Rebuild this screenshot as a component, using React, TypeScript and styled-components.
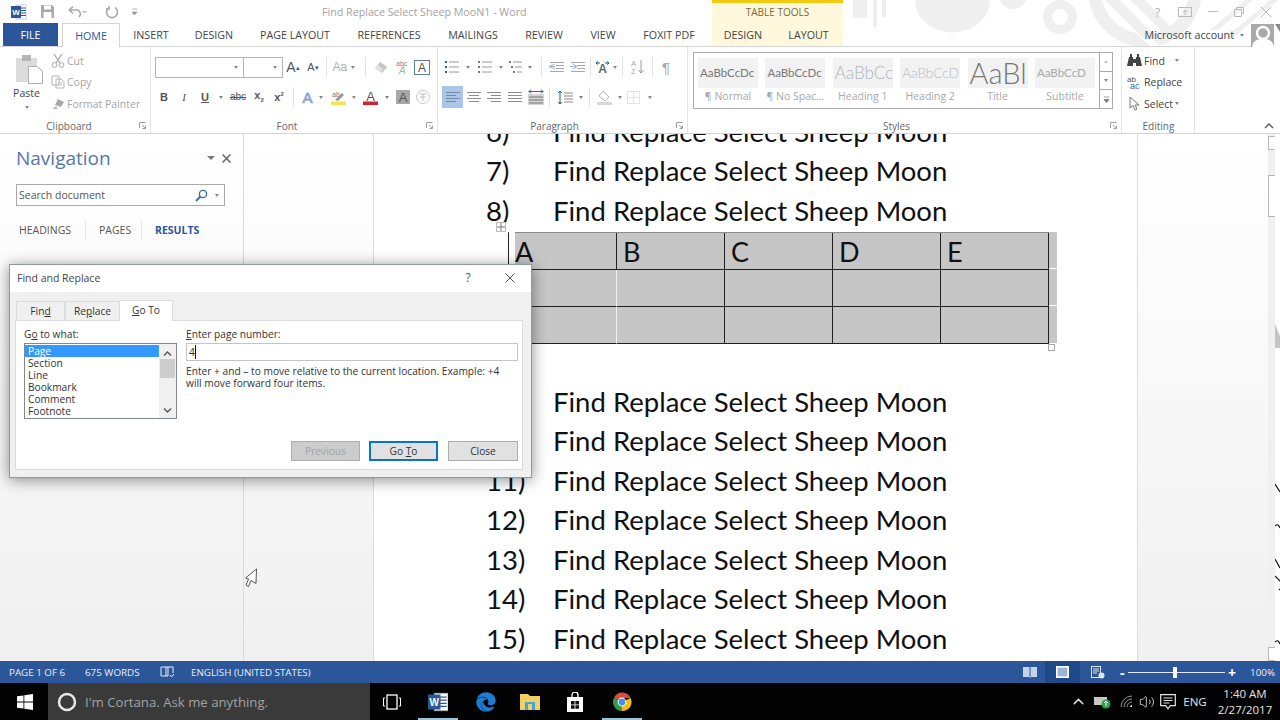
import React from 'react';
import styled, { createGlobalStyle } from 'styled-components';
import { ChevronUp, Volume2 } from 'lucide-react';
import { FaEdge } from 'react-icons/fa';

const GlobalStyle = createGlobalStyle`
  html, body { margin: 0; padding: 0; background: #fff; }
  * { box-sizing: border-box; }
`;

const UI = '"Open Sans", "Noto Sans", sans-serif';
const BLUE = '#2b579a';

const Screen = styled.div`
  width: 1280px;
  height: 720px;
  position: relative;
  overflow: hidden;
  display: flex;
  flex-direction: column;
  font-family: ${UI};
  color: #444;
`;

/* ---------- title + tabs ---------- */
const Top = styled.div`
  position: relative;
  height: 47px;
  background: #fff;
  border-bottom: 1px solid #d4d4d4;
`;
const Art = styled.svg`
  position: absolute;
  left: 840px;
  top: 0;
`;
const TitleBar = styled.div`
  position: relative;
  height: 23px;
  display: flex;
  align-items: center;
`;
const Qat = styled.div`
  width: 322px;
  display: flex;
  align-items: center;
  padding-left: 11px;
`;
const QatCell = styled.span<{ $w: number }>`
  width: ${(p) => p.$w}px;
  display: flex;
  align-items: center;
  justify-content: flex-start;
`;
const DocTitle = styled.div`
  width: 390px;
  font-size: 10.7px;
  color: #a3a3a3;
  white-space: nowrap;
`;
const ToolsHead = styled.div`
  width: 131px;
  height: 23px;
  background: #fff8dc;
  border-top: 3px solid #f3c911;
  color: #7b6a35;
  font-size: 10px;
  text-align: center;
  line-height: 19px;
`;
const WinControls = styled.div`
  margin-left: auto;
  display: flex;
  align-items: center;
  color: #b5b5b5;
  font-size: 13px;
`;
const WinCell = styled.span<{ $w: number }>`
  width: ${(p) => p.$w}px;
  display: flex;
  justify-content: center;
  align-items: center;
`;
const TabRow = styled.div`
  position: relative;
  height: 24px;
  display: flex;
  align-items: stretch;
  padding-left: 3px;
  font-size: 10.7px;
`;
const FileTab = styled.div`
  width: 55px;
  height: 23px;
  background: ${BLUE};
  color: #fff;
  display: flex;
  align-items: center;
  justify-content: center;
`;
const HomeTab = styled.div`
  width: 58px;
  height: 24px;
  margin-left: 4px;
  background: #fff;
  border: 1px solid #d4d4d4;
  border-bottom: none;
  color: ${BLUE};
  display: flex;
  align-items: center;
  justify-content: center;
  position: relative;
  z-index: 1;
`;
const Tab = styled.div<{ $w: number }>`
  width: ${(p) => p.$w}px;
  display: flex;
  align-items: center;
  justify-content: center;
  white-space: nowrap;
`;
const ToolsTabs = styled.div`
  width: 131px;
  height: 23px;
  margin-left: 4px;
  background: #fff8dc;
  display: flex;
`;
const Account = styled.div`
  margin-left: auto;
  display: flex;
  align-items: center;
  font-size: 10.7px;
  color: #444;
  gap: 6px;
`;
const Avatar = styled.svg`
  margin-left: 1px;
  display: block;
`;

/* ---------- ribbon ---------- */
const Ribbon = styled.div`
  height: 87px;
  background: #fff;
  border-bottom: 1px solid #d4d4d4;
  display: flex;
  position: relative;
`;
const Group = styled.div<{ $w: number; $pad?: number }>`
  width: ${(p) => p.$w}px;
  height: 86px;
  padding-left: ${(p) => p.$pad ?? 4}px;
  border-right: 1px solid #e4e4e4;
  display: flex;
  flex-direction: column;
  position: relative;
`;
const Rows = styled.div`
  padding-top: 9px;
  display: flex;
  flex-direction: column;
  gap: 8px;
`;
const Row = styled.div`
  height: 22px;
  display: flex;
  align-items: center;
`;
const GroupLabel = styled.div<{ $pr: number }>`
  margin-top: auto;
  margin-left: -4px;
  height: 14px;
  line-height: 14px;
  padding-right: ${(p) => p.$pr}px;
  text-align: center;
  font-size: 10px;
  color: #666;
  position: relative;
`;
const Launcher = styled.svg`
  position: absolute;
  right: 4px;
  top: 3px;
`;
const Cell = styled.span<{ $w: number; $bg?: string }>`
  width: ${(p) => p.$w}px;
  height: 22px;
  display: flex;
  align-items: center;
  justify-content: center;
  flex: none;
  background: ${(p) => p.$bg ?? 'transparent'};
`;
const Letter = styled.span<{ $size?: number; $color?: string; $weight?: number; $italic?: boolean; $under?: boolean }>`
  font-size: ${(p) => p.$size ?? 12}px;
  color: ${(p) => p.$color ?? '#555'};
  font-weight: ${(p) => p.$weight ?? 400};
  font-style: ${(p) => (p.$italic ? 'italic' : 'normal')};
  text-decoration: ${(p) => (p.$under ? 'underline' : 'none')};
  font-family: "Liberation Sans", sans-serif;
  line-height: 1;
`;
const Chev = styled.span`
  width: 0;
  height: 0;
  border-left: 2.5px solid transparent;
  border-right: 2.5px solid transparent;
  border-top: 3px solid #888;
`;
const Sep = styled.span<{ $l: number; $r: number }>`
  width: 1px;
  height: 20px;
  background: #e4e4e4;
  margin: 0 ${(p) => p.$r}px 0 ${(p) => p.$l}px;
  flex: none;
`;
const Combo = styled.div<{ $w: number }>`
  width: ${(p) => p.$w}px;
  height: 21px;
  border: 1px solid #b5b5b5;
  margin-right: -1px;
  background: #fff;
  display: flex;
  align-items: center;
  justify-content: flex-end;
  padding-right: 5px;
  flex: none;
`;
const ClipWrap = styled.div`
  display: flex;
  margin-left: -4px;
`;
const PasteCol = styled.div`
  width: 50px;
  display: flex;
  flex-direction: column;
  align-items: center;
  padding-top: 8px;
  padding-left: 3px;
  font-size: 10.5px;
  color: #444;
`;
const PasteArt = styled.svg`
  margin-left: 5px;
`;
const PasteLabel = styled.div`
  margin-top: 1px;
  line-height: 16px;
  margin-bottom: 5px;
`;
const SmallList = styled.div`
  padding-top: 3px;
  display: flex;
  flex-direction: column;
`;
const SmallItem = styled.div<{ $dark?: boolean }>`
  height: 21.6px;
  display: flex;
  align-items: center;
  gap: 2px;
  font-size: 10.5px;
  white-space: nowrap;
  color: ${(p) => (p.$dark ? '#444' : '#a6a6a6')};
`;
const SmallIcon = styled.span`
  width: 15px;
  display: flex;
  justify-content: center;
`;
const Gallery = styled.div`
  margin: 5px 0 0 1px;
  width: 420px;
  height: 57px;
  border: 1px solid #ababab;
  display: flex;
  padding: 5px 0 0 4px;
`;
const StyleItem = styled.div`
  width: 60px;
  margin-right: 7.4px;
  flex: none;
  text-align: center;
  &:nth-child(6) {
    margin-right: 4px;
  }
`;
const StylePreview = styled.div<{ $size: number; $color: string; $thin?: boolean }>`
  height: 30px;
  background: #f2f2f2;
  font-size: ${(p) => p.$size}px;
  color: ${(p) => p.$color};
  line-height: 30px;
  overflow: hidden;
  white-space: nowrap;
  text-align: left;
  padding-left: 2px;
  font-family: "Lato", sans-serif;
  font-weight: ${(p) => (p.$thin ? 300 : 400)};
`;
const StyleName = styled.div`
  font-size: 10.5px;
  color: #a8a8a8;
  line-height: 16px;
  white-space: nowrap;
`;
const GalleryScroll = styled.div`
  margin: -5px 0 0 0;
  width: 14px;
  flex: none;
  border-left: 1px solid #ababab;
  display: flex;
  flex-direction: column;
`;
const GalleryBtn = styled.div<{ $last?: boolean }>`
  flex: 1;
  border-bottom: ${(p) => (p.$last ? 'none' : '1px solid #ababab')};
  display: flex;
  align-items: center;
  justify-content: center;
`;
const Collapse = styled.svg`
  position: absolute;
  left: 1264px;
  top: 76px;
`;

/* ---------- main ---------- */
const Main = styled.div`
  flex: 1;
  min-height: 0;
  display: flex;
  background: linear-gradient(#ffffff, #fbfbfb 30%, #f0f0f0);
`;
const NavPane = styled.div`
  width: 244px;
  flex: none;
  border-right: 1px solid #d9d9d9;
  padding: 11px 0 0 16px;
`;
const NavHead = styled.div`
  display: flex;
  align-items: center;
  width: 215px;
  height: 26px;
  font-size: 19px;
  color: #5578a8;
`;
const NavClose = styled.span`
  margin-left: auto;
  display: flex;
  align-items: center;
  gap: 7px;
`;
const SearchBox = styled.div`
  margin-top: 13px;
  width: 209px;
  height: 22px;
  border: 1px solid #a9a9a9;
  background: #fff;
  display: flex;
  align-items: center;
  padding: 0 5px 0 2px;
  font-size: 10.5px;
  color: #555;
`;
const SearchIcons = styled.span`
  margin-left: auto;
  display: flex;
  align-items: center;
  gap: 7px;
`;
const NavTabs = styled.div`
  margin-top: 17px;
  display: flex;
  font-size: 10.5px;
  color: #555;
  padding-left: 3px;
`;
const NavTab = styled.span<{ $w: number; $on?: boolean; $split?: boolean }>`
  width: ${(p) => p.$w}px;
  white-space: nowrap;
  color: ${(p) => (p.$on ? BLUE : '#555')};
  font-weight: ${(p) => (p.$on ? 700 : 400)};
  position: relative;
  &::after {
    content: '';
    display: ${(p) => (p.$split ? 'block' : 'none')};
    position: absolute;
    right: 13px;
    top: -2px;
    width: 1px;
    height: 20px;
    background: #e6e6e6;
  }
`;
const Gutter = styled.div`
  width: 130px;
  flex: none;
  border-right: 1px solid #dcdcdc;
`;
const Page = styled.div`
  width: 764px;
  flex: none;
  background: #fff;
  border-right: 1px solid #dcdcdc;
  overflow: hidden;
  padding: 0 0 0 112px;
`;
const DocFlow = styled.div`
  margin-top: -22.5px;
`;
const Line = styled.div`
  height: 39.5px;
  line-height: 39.5px;
  display: flex;
  font-family: "Lato", "Liberation Sans", sans-serif;
  font-size: 27.5px;
  color: #111;
  white-space: nowrap;
`;
const Num = styled.span`
  width: 67px;
  flex: none;
`;
const Blank = styled.div`
  height: 38px;
`;
const TableWrap = styled.div`
  position: relative;
  margin: 1.5px 0 0 22px;
  width: 541px;
`;
const Table = styled.div`
  display: grid;
  grid-template-columns: repeat(5, 108px);
  grid-auto-rows: 37px;
  background: #c6c6c6;
  border-top: 1px solid #8c8c8c;
  border-left: 1px solid #222;
  width: 541px;
`;
const TableCell = styled.div<{ $first?: boolean; $pale?: boolean }>`
  position: relative;
  border-right: 1px solid ${(p) => (p.$pale ? '#f0f0f0' : '#222')};
  border-bottom: 1px solid #222;
  font-family: "Lato", "Liberation Sans", sans-serif;
  font-size: 27px;
  line-height: 37px;
  padding-left: 6px;
  color: #111;
  background: ${(p) => (p.$first ? 'linear-gradient(90deg, #fff 6px, #c6c6c6 6px)' : 'transparent')};
`;
const TopGap = styled.span`
  position: absolute;
  left: 0;
  top: -1px;
  width: 6px;
  height: 1px;
  background: #fff;
`;
const MoveHandle = styled.div`
  position: absolute;
  left: -12px;
  top: -10px;
  width: 10px;
  height: 10px;
  border: 1px solid #bbb;
  background: #fff;
  display: flex;
  align-items: center;
  justify-content: center;
`;
const RowEnd = styled.div`
  position: absolute;
  left: 541px;
  top: 0;
  width: 8px;
  height: 111px;
  background: linear-gradient(
    #c6c6c6 36px,
    #fff 36px,
    #fff 37px,
    #c6c6c6 37px,
    #c6c6c6 73px,
    #fff 73px,
    #fff 74px,
    #c6c6c6 74px
  );
`;
const ResizeHandle = styled.div`
  position: absolute;
  left: 540px;
  top: 112px;
  width: 7px;
  height: 7px;
  border: 1px solid #aaa;
  background: #fff;
`;
const RightGutter = styled.div`
  flex: 1;
  min-width: 0;
`;
const ScrollBar = styled.div`
  width: 7px;
  flex: none;
  background: #f0f0f0;
  display: flex;
  flex-direction: column;
  padding-top: 2px;
`;
const ScrollBtn = styled.div`
  height: 14px;
  border: 1px solid #b8b8b8;
  border-right: none;
  background: #fff;
  display: flex;
  align-items: center;
  justify-content: center;
`;
const ScrollThumb = styled.div`
  margin-top: 25px;
  height: 42px;
  border: 1px solid #b8b8b8;
  border-right: none;
  background: #fff;
`;
const ScrollEnd = styled(ScrollBtn)`
  margin-top: auto;
`;
const Stray = styled.svg`
  flex: none;
  display: block;
  background: #fff;
`;

/* ---------- status + taskbar ---------- */
const StatusBar = styled.div`
  height: 22px;
  background: ${BLUE};
  color: #e8eef7;
  font-size: 9.8px;
  display: flex;
  align-items: center;
  padding-left: 9px;
`;
const StatusItem = styled.span<{ $w: number }>`
  width: ${(p) => p.$w}px;
  white-space: nowrap;
  display: flex;
  align-items: center;
`;
const ViewBtn = styled.span<{ $w: number; $on?: boolean }>`
  width: ${(p) => p.$w}px;
  height: 22px;
  display: flex;
  align-items: center;
  justify-content: center;
  background: ${(p) => (p.$on ? '#1f4a8a' : 'transparent')};
`;
const StatusRight = styled.div`
  margin-left: auto;
  display: flex;
  align-items: center;
`;
const Zoom = styled.div`
  display: flex;
  align-items: center;
  margin-left: 5px;
  width: 116px;
  gap: 3px;
  color: #fff;
  font-size: 14px;
  font-weight: 700;
`;
const ZoomTrack = styled.div`
  flex: 1;
  height: 1px;
  background: #dfe7f3;
  position: relative;
`;
const ZoomThumb = styled.span`
  position: absolute;
  left: 45px;
  top: -5px;
  width: 4px;
  height: 11px;
  background: #fff;
`;
const ZoomPct = styled.span`
  width: 35px;
  text-align: right;
  padding-right: 5px;
  margin-left: 9px;
`;
const Taskbar = styled.div`
  height: 37px;
  background: #020202;
  display: flex;
  align-items: center;
`;
const StartBtn = styled.div`
  width: 48px;
  display: flex;
  justify-content: center;
  padding-left: 2px;
`;
const Cortana = styled.div`
  width: 322px;
  height: 37px;
  background: #3a3a3a;
  display: flex;
  align-items: center;
  padding-left: 9px;
  gap: 8px;
  color: #a2a2a2;
  font-size: 13.2px;
  white-space: nowrap;
`;
const TaskIcon = styled.div<{ $w: number; $on?: boolean }>`
  width: ${(p) => p.$w}px;
  height: 37px;
  display: flex;
  align-items: center;
  justify-content: center;
  position: relative;
  &::after {
    content: '';
    display: ${(p) => (p.$on ? 'block' : 'none')};
    position: absolute;
    left: 4px;
    right: 4px;
    bottom: 0;
    height: 2px;
    background: #9cc4d8;
  }
`;
const Tray = styled.div`
  margin-left: auto;
  display: flex;
  align-items: center;
  color: #e4e4e4;
  font-size: 11.5px;
`;
const TrayCell = styled.span<{ $w: number }>`
  width: ${(p) => p.$w}px;
  display: flex;
  justify-content: center;
  align-items: center;
`;
const Clock = styled.div`
  width: 70px;
  text-align: center;
  line-height: 16px;
  font-size: 11.5px;
`;

/* ---------- dialog ---------- */
const Dialog = styled.div`
  position: absolute;
  left: 9px;
  top: 264px;
  width: 523px;
  height: 214px;
  background: #f0f0f0;
  border: 1px solid #8f9a9a;
  box-shadow: 0 2px 14px rgba(0, 0, 0, 0.45);
  display: flex;
  flex-direction: column;
  font-size: 10.2px;
  color: #333;
`;
const DlgTitle = styled.div`
  height: 27px;
  flex: none;
  background: #fff;
  display: flex;
  align-items: center;
  padding: 0 0 2px 7px;
  font-size: 10.5px;
  color: #444;
`;
const DlgHelp = styled.span`
  margin-left: auto;
  width: 42px;
  font-size: 12px;
  text-align: center;
  color: #555;
`;
const DlgClose = styled.span`
  width: 42px;
  display: flex;
  justify-content: center;
`;
const DlgTabs = styled.div`
  height: 28px;
  flex: none;
  display: flex;
  align-items: flex-end;
  padding-left: 6px;
`;
const DlgTab = styled.div<{ $w: number; $on?: boolean }>`
  width: ${(p) => p.$w}px;
  height: ${(p) => (p.$on ? 21 : 19)}px;
  background: ${(p) => (p.$on ? '#fff' : '#f0f0f0')};
  border: 1px solid #dcdcdc;
  border-bottom: none;
  border-left: ${(p) => (p.$on ? 'none' : '1px solid #dcdcdc')};
  display: flex;
  align-items: center;
  justify-content: center;
  padding-bottom: ${(p) => (p.$on ? 2 : 0)}px;
  margin-bottom: ${(p) => (p.$on ? -1 : 0)}px;
  position: relative;
`;
const DlgPanel = styled.div`
  margin: 0 8px 0 5px;
  height: 150px;
  background: #fff;
  border: 1px solid #dcdcdc;
  padding: 6px 4px 0 8px;
  display: flex;
  flex-direction: column;
`;
const DlgCols = styled.div`
  display: flex;
  gap: 9px;
`;
const ListCol = styled.div`
  width: 153px;
  flex: none;
`;
const EntryCol = styled.div`
  flex: 1;
`;
const FieldLabel = styled.div`
  line-height: 14px;
  margin-bottom: 2px;
`;
const ListBox = styled.div`
  height: 76px;
  border: 1px solid #828790;
  display: flex;
  padding: 1px 0 0 0;
`;
const ListItems = styled.div`
  flex: 1;
`;
const ListItem = styled.div<{ $on?: boolean }>`
  height: 12.1px;
  line-height: 12px;
  padding-left: 3px;
  background: ${(p) => (p.$on ? '#3399ff' : 'transparent')};
  color: ${(p) => (p.$on ? '#fff' : '#333')};
`;
const ListScroll = styled.div`
  width: 17px;
  background: #f0f0f0;
  margin-top: -1px;
  display: flex;
  flex-direction: column;
  align-items: center;
  padding-top: 7px;
`;
const ListThumb = styled.div`
  width: 15px;
  height: 19px;
  background: #cdcdcd;
  margin-top: 3px;
`;
const ListDown = styled.div`
  margin-top: auto;
  margin-bottom: 5px;
  line-height: 0;
`;
const TextInput = styled.div`
  height: 18px;
  border: 1px solid #c4c4c4;
  padding-left: 2px;
  line-height: 16px;
`;
const Caret = styled.span`
  border-right: 1px solid #111;
`;
const Help = styled.div`
  margin-top: 4px;
  line-height: 12px;
  white-space: nowrap;
`;
const DlgButtons = styled.div`
  margin-top: auto;
  margin-bottom: 8px;
  display: flex;
  justify-content: flex-end;
`;
const DlgButton = styled.div<{ $kind?: 'off' | 'main'; $ml: number }>`
  width: ${(p) => (p.$kind ? 69 : 70)}px;
  height: 20px;
  margin-left: ${(p) => p.$ml}px;
  display: flex;
  align-items: center;
  justify-content: center;
  background: ${(p) => (p.$kind === 'off' ? '#cccccc' : '#e1e1e1')};
  color: ${(p) => (p.$kind === 'off' ? '#a3a3a3' : '#333')};
  border: ${(p) => (p.$kind === 'main' ? '2px solid #0a74c8' : '1px solid #adadad')};
`;
const U = styled.span`
  text-decoration: underline;
`;
const Pointer = styled.svg`
  position: absolute;
  left: 243px;
  top: 567px;
`;

/* ---------- drawings ---------- */
const Lines = ({ n = 4, w = 14, c = '#8d8d8d', align = 'left' }: { n?: number; w?: number; c?: string; align?: string }) => {
  const widths = [w, w - 4, w, w - 4, w];
  return (
    <svg width={w} height={12} viewBox={`0 0 ${w} 12`}>
      {Array.from({ length: n }).map((_, i) => {
        const lw = align === 'justify' ? w : widths[i];
        const x = align === 'left' || align === 'justify' ? 0 : align === 'right' ? w - lw : (w - lw) / 2;
        return <rect key={i} x={x} y={i * 3 + 1} width={lw} height={1} fill={c} />;
      })}
    </svg>
  );
};

const ListGlyph = ({ kind }: { kind: 'bullet' | 'num' | 'multi' }) => (
  <svg width="15" height="14" viewBox="0 0 15 14">
    {[1, 6, 11].map((y, i) => (
      <g key={y}>
        <rect x={kind === 'multi' ? i * 2 : 0} y={y} width="2" height="2" fill={kind === 'bullet' ? '#2f5d9a' : '#777'} />
        <rect x={4 + (kind === 'multi' ? i * 2 : 0)} y={y + 0.5} width={kind === 'multi' ? 9 - i * 2 : 10} height="1" fill="#999" />
      </g>
    ))}
  </svg>
);

const Indent = ({ dir }: { dir: 'in' | 'out' }) => (
  <svg width="16" height="12" viewBox="0 0 16 12">
    {[1, 4, 7, 10].map((y) => (
      <rect key={y} x={y === 1 || y === 10 ? 2 : 8} y={y} width={y === 1 || y === 10 ? 14 : 8} height="1" fill="#a8a8a8" />
    ))}
    <path d={dir === 'out' ? 'M7 3L1 5.5L7 8M1 5.5h6' : 'M1 5.5h6M4 3l4 2.5L4 8'} stroke="#a0b4cc" fill="none" />
  </svg>
);

const WordIcon = ({ size = 16 }: { size?: number }) => (
  <svg width={size} height={size} viewBox="0 0 16 16">
    <rect x="5" y="1" width="11" height="14" fill="#fff" stroke="#9ab" strokeWidth="0.6" />
    <path d="M9 4h6M9 6.5h6M9 9h6M9 11.5h6" stroke="#2b579a" />
    <rect x="0" y="2" width="10" height="12" fill="#2b579a" />
    <text x="5" y="11" fontSize="8" fontWeight="700" fill="#fff" textAnchor="middle" fontFamily="Liberation Sans">W</text>
  </svg>
);

const ChromeIcon = () => (
  <svg width="20" height="20" viewBox="0 0 20 20">
    <path d="M10 10L2.2 5.5A9 9 0 0 1 18.6 6H10z" fill="#de4b3b" />
    <path d="M10 10L18.6 6A9 9 0 0 1 10 19z" fill="#f4c20d" />
    <path d="M10 10v9A9 9 0 0 1 2.2 5.5z" fill="#2f9e52" />
    <circle cx="10" cy="10" r="4.4" fill="#fff" />
    <circle cx="10" cy="10" r="3.4" fill="#4a8af4" />
  </svg>
);

const DOC_TEXT = 'Find Replace Select Sheep Moon';

const launcher = (
  <Launcher width="7" height="7" viewBox="0 0 7 7">
    <path d="M0.5 6V0.5H6.5M3 3l3.2 3.2M6.5 3.5v3h-3" stroke="#888" fill="none" strokeWidth="0.8" />
  </Launcher>
);

const App: React.FC = () => (
  <Screen>
    <GlobalStyle />
    <Top>
      <Art width="440" height="46" viewBox="0 0 440 46">
        <g fill="#efefef">
          <rect x="13" y="0" width="14" height="18" />
          <rect x="33" y="0" width="4" height="27" />
          <rect x="42" y="0" width="4" height="17" />
          <path d="M75 0h75a37 32 0 0 1-75 0z" />
          <circle cx="173" cy="-5" r="14" />
          <circle cx="220" cy="17" r="17" />
          <circle cx="220" cy="17" r="8" fill="#fff" />
          <circle cx="305" cy="-10" r="57" />
          <circle cx="305" cy="-10" r="44" fill="#fff" />
          <path d="M255 -5L310 46l10 0L262 -8z" fill="#fff" />
          <path d="M265 0L305 40l12-2L280 0zM290 0l35 34 8-5L305 0z" />
          <path d="M370 30L405 0h8L378 30zM385 38L430 0h8L393 38z" />
        </g>
      </Art>
      <TitleBar>
        <Qat>
          <QatCell $w={29}><WordIcon /></QatCell>
          <QatCell $w={27}>
            <svg width="15" height="15" viewBox="0 0 15 15">
              <path d="M1 1h11l2 2v11H1z" fill="#a9a9a9" />
              <rect x="4" y="1.5" width="7" height="4" fill="#fff" />
              <rect x="3.5" y="8" width="8" height="6" fill="#fff" />
            </svg>
          </QatCell>
          <QatCell $w={38}>
            <svg width="24" height="12" viewBox="0 0 24 12">
              <path d="M2 4h8a4 4 0 0 1 2 7M2 4l4-3.5M2 4l4 3.5" stroke="#a9a9a9" strokeWidth="1.6" fill="none" />
              <path d="M15 5h5l-2.5 2.500z" fill="#bbb" />
            </svg>
          </QatCell>
          <QatCell $w={26}>
            <svg width="14" height="14" viewBox="0 0 14 14">
              <path d="M4 2.500A5.500 5.500 0 1 0 10 2.500M4 1v3H1" stroke="#a9a9a9" strokeWidth="1.6" fill="none" />
            </svg>
          </QatCell>
          <QatCell $w={10}>
            <svg width="7" height="8" viewBox="0 0 7 8">
              <path d="M1 1h5M1 4h5L3.500 7z" stroke="#999" fill="#999" strokeWidth="0.7" />
            </svg>
          </QatCell>
        </Qat>
        <DocTitle>Find Replace Select Sheep MooN1 - Word</DocTitle>
        <ToolsHead>TABLE TOOLS</ToolsHead>
        <WinControls>
          <WinCell $w={27}>?</WinCell>
          <WinCell $w={28}>
            <svg width="14" height="10" viewBox="0 0 14 10">
              <rect x="0.500" y="0.500" width="13" height="9" fill="none" stroke="#bbb" />
              <path d="M7 8V3M5 5l2-2 2 2" stroke="#bbb" fill="none" />
            </svg>
          </WinCell>
          <WinCell $w={27}>
            <svg width="10" height="2"><rect width="10" height="1" fill="#bbb" /></svg>
          </WinCell>
          <WinCell $w={26}>
            <svg width="10" height="10" viewBox="0 0 10 10">
              <path d="M2.500 2.500V.5h7v6h-2M.5 2.500h7v7h-7z" fill="none" stroke="#bbb" />
            </svg>
          </WinCell>
          <WinCell $w={28}>
            <svg width="10" height="10" viewBox="0 0 10 10">
              <path d="M0 0l10 10M10 0L0 10" stroke="#b5b5b5" />
            </svg>
          </WinCell>
        </WinControls>
      </TitleBar>
      <TabRow>
        <FileTab>FILE</FileTab>
        <HomeTab>HOME</HomeTab>
        <Tab $w={62}>INSERT</Tab>
        <Tab $w={64}>DESIGN</Tab>
        <Tab $w={98}>PAGE LAYOUT</Tab>
        <Tab $w={90}>REFERENCES</Tab>
        <Tab $w={78}>MAILINGS</Tab>
        <Tab $w={64}>REVIEW</Tab>
        <Tab $w={54}>VIEW</Tab>
        <Tab $w={78}>FOXIT PDF</Tab>
        <ToolsTabs>
          <Tab $w={62}>DESIGN</Tab>
          <Tab $w={69}>LAYOUT</Tab>
        </ToolsTabs>
        <Account>
          Microsoft account
          <Chev />
          <Avatar width="29" height="23" viewBox="0 0 29 23">
            <rect width="29" height="23" fill="#a9a9a9" />
            <circle cx="12" cy="9" r="6" fill="none" stroke="#fff" strokeWidth="2.500" />
            <path d="M1 23c1-7 6-8 11-8s10 1 11 8z" fill="#fff" />
            <rect x="23" width="6" height="23" fill="#fff" />
            <path d="M24 0h5v8z" fill="#8c8c8c" />
          </Avatar>
        </Account>
      </TabRow>
    </Top>

    <Ribbon>
      <Group $w={151}>
        <ClipWrap>
          <PasteCol>
            <PasteArt width="27" height="29" viewBox="0 0 27 29">
              <rect x="0" y="3" width="21" height="24" fill="#dcdcdc" />
              <rect x="6" y="0" width="9" height="6" fill="#b5b5b5" />
              <path d="M12.500 11.500h9l5 5v12h-14z" fill="#fff" stroke="#b0b0b0" />
            </PasteArt>
            <PasteLabel>Paste</PasteLabel>
            <Chev />
          </PasteCol>
          <SmallList>
            <SmallItem>
              <SmallIcon>
                <svg width="14" height="14" viewBox="0 0 14 14">
                  <path d="M3 0l6 9M11 0L5 9" stroke="#a9a9a9" strokeWidth="1.300" />
                  <circle cx="3.500" cy="11" r="2.400" fill="none" stroke="#a9a9a9" />
                  <circle cx="10.500" cy="11" r="2.400" fill="none" stroke="#a9a9a9" />
                </svg>
              </SmallIcon>
              Cut
            </SmallItem>
            <SmallItem>
              <SmallIcon>
                <svg width="14" height="14" viewBox="0 0 14 14">
                  <path d="M1 1h7v9H1zM5 4h5l3 3v6H5z" fill="#fff" stroke="#b5b5b5" />
                  <path d="M7 8h4M7 10h4" stroke="#c0c0c0" />
                </svg>
              </SmallIcon>
              Copy
            </SmallItem>
            <SmallItem>
              <SmallIcon>
                <svg width="14" height="12" viewBox="0 0 14 12">
                  <path d="M7 1l6 3-3 5-6-2z" fill="#a8a8a8" />
                  <path d="M5 8l-4 3h6z" fill="#bdbdbd" />
                </svg>
              </SmallIcon>
              Format Painter
            </SmallItem>
          </SmallList>
        </ClipWrap>
        <GroupLabel $pr={12}>Clipboard{launcher}</GroupLabel>
      </Group>

      <Group $w={287}>
        <Rows>
          <Row>
            <Combo $w={89}><Chev /></Combo>
            <Combo $w={40}><Chev /></Combo>
            <Cell $w={22}><Letter $size={14} $color="#555">A</Letter><Letter $size={7} $color="#2b579a">▴</Letter></Cell>
            <Cell $w={18}><Letter $size={11} $color="#555">A</Letter><Letter $size={7} $color="#2b579a">▾</Letter></Cell>
            <Sep $l={4} $r={4} />
            <Cell $w={26}><Letter $size={12} $color="#b0b0b0">Aa</Letter>&nbsp;<Chev /></Cell>
            <Sep $l={8} $r={4} />
            <Cell $w={22}>
              <svg width="14" height="13" viewBox="0 0 14 13">
                <path d="M6 1l7 5-5 6-7-5z" fill="#c4c4c4" />
                <path d="M1 7l3-3 5 4-2 3z" fill="#e2e2e2" />
              </svg>
            </Cell>
            <Cell $w={20}>
              <svg width="14" height="15" viewBox="0 0 14 15">
                <text x="1" y="6" fontSize="7" fill="#888" fontFamily="Liberation Sans">abc</text>
                <text x="4" y="14" fontSize="10" fontStyle="italic" fill="#b0b0b0" fontFamily="Liberation Sans">A</text>
              </svg>
            </Cell>
            <Cell $w={20}>
              <svg width="16" height="15" viewBox="0 0 16 15">
                <rect x="0.500" y="0.500" width="15" height="14" fill="#fff" stroke="#5f7d9e" />
                <text x="8" y="12" fontSize="12" textAnchor="middle" fill="#555" fontFamily="Liberation Sans">A</text>
              </svg>
            </Cell>
          </Row>
          <Row>
            <Cell $w={18}><Letter $weight={700} $size={11}>B</Letter></Cell>
            <Cell $w={22}><Letter $italic $size={11} style={{ fontFamily: 'Liberation Serif' }}>I</Letter></Cell>
            <Cell $w={20}><Letter $under $weight={700} $size={11}>U</Letter></Cell>
            <Cell $w={12}><Chev /></Cell>
            <Cell $w={22}><Letter $size={10} style={{ textDecoration: 'line-through' }}>abc</Letter></Cell>
            <Cell $w={20}><Letter $size={11} $weight={700}>x<sub style={{ fontSize: 6 }}>2</sub></Letter></Cell>
            <Cell $w={20}><Letter $size={11} $weight={700}>x<sup style={{ fontSize: 6 }}>2</sup></Letter></Cell>
            <Sep $l={4} $r={4} />
            <Cell $w={18}>
              <svg width="15" height="15" viewBox="0 0 15 15">
                <text x="7.500" y="13" fontSize="15" textAnchor="middle" fill="#dbe7f5" stroke="#6c93c4" strokeWidth="0.7" fontFamily="Liberation Sans">A</text>
              </svg>
            </Cell>
            <Cell $w={10}><Chev /></Cell>
            <Cell $w={24}>
              <svg width="15" height="15" viewBox="0 0 15 15">
                <text x="1" y="7" fontSize="7" fill="#777" fontFamily="Liberation Sans">ab</text>
                <path d="M4 10l7-7 2 2-6 6z" fill="#999" />
                <rect y="11.500" width="15" height="3.500" fill="#f3e64a" />
              </svg>
            </Cell>
            <Cell $w={8}><Chev /></Cell>
            <Cell $w={24}>
              <svg width="15" height="15" viewBox="0 0 15 15">
                <text x="7.500" y="11" fontSize="13" textAnchor="middle" fill="#555" fontFamily="Liberation Sans">A</text>
                <rect y="11.500" width="15" height="3.500" fill="#d7202a" />
              </svg>
            </Cell>
            <Cell $w={10}><Chev /></Cell>
            <Cell $w={21}>
              <svg width="14" height="14" viewBox="0 0 14 14">
                <rect width="14" height="14" fill="#a8a8a8" />
                <text x="7" y="12" fontSize="13" textAnchor="middle" fill="#555" fontFamily="Liberation Sans">A</text>
              </svg>
            </Cell>
            <Cell $w={20}>
              <svg width="14" height="14" viewBox="0 0 14 14">
                <circle cx="7" cy="7" r="6.500" fill="none" stroke="#c8c8c8" />
                <path d="M4 4h6M4 7h6M7 4v7" stroke="#c0c0c0" />
              </svg>
            </Cell>
          </Row>
        </Rows>
        <GroupLabel $pr={14}>Font{launcher}</GroupLabel>
      </Group>

      <Group $w={250}>
        <Rows>
          <Row>
            <Cell $w={20}><ListGlyph kind="bullet" /></Cell>
            <Cell $w={12}><Chev /></Cell>
            <Cell $w={22}><ListGlyph kind="num" /></Cell>
            <Cell $w={10}><Chev /></Cell>
            <Cell $w={20}><ListGlyph kind="multi" /></Cell>
            <Cell $w={8}><Chev /></Cell>
            <Sep $l={7} $r={4} />
            <Cell $w={20}><Indent dir="out" /></Cell>
            <Cell $w={22}><Indent dir="in" /></Cell>
            <Sep $l={2} $r={2} />
            <Cell $w={18}>
              <svg width="15" height="13" viewBox="0 0 15 13">
                <text x="7.500" y="12" fontSize="12" fontWeight="700" textAnchor="middle" fill="#666" fontFamily="Liberation Sans">A</text>
                <path d="M1 2l4 0M1 2l2-1.500M1 2l2 1.500M14 2h-4M14 2l-2-1.500M14 2l-2 1.500" stroke="#2b579a" fill="none" />
              </svg>
            </Cell>
            <Cell $w={8}><Chev /></Cell>
            <Sep $l={3} $r={3} />
            <Cell $w={22}>
              <svg width="15" height="16" viewBox="0 0 15 16">
                <text x="1" y="7" fontSize="7.500" fill="#aaa" fontFamily="Liberation Sans">A</text>
                <text x="1" y="15" fontSize="7.500" fill="#aaa" fontFamily="Liberation Sans">Z</text>
                <path d="M11 1v13M8.500 11l2.500 3 2.500-3" stroke="#9a9a9a" fill="none" />
              </svg>
            </Cell>
            <Sep $l={4} $r={3} />
            <Cell $w={20}><Letter $size={15} $color="#a8a8a8">¶</Letter></Cell>
          </Row>
          <Row>
            <Cell $w={21} $bg="#a9c6ea"><Lines n={4} align="left" c="#7a8a9a" /></Cell>
            <Cell $w={21}><Lines align="center" /></Cell>
            <Cell $w={20}><Lines align="right" /></Cell>
            <Cell $w={21}><Lines align="justify" /></Cell>
            <Cell $w={21}>
              <svg width="16" height="16" viewBox="0 0 16 16">
                <rect y="5" width="16" height="11" fill="#d4d4d4" />
                <path d="M1 8h14M1 11h14M1 14h14" stroke="#777" />
                <path d="M1 2.500h14M1 2.500l2-2M1 2.500l2 2M15 2.500l-2-2M15 2.500l-2 2" stroke="#2b579a" fill="none" />
              </svg>
            </Cell>
            <Sep $l={3} $r={3} />
            <Cell $w={24}>
              <svg width="16" height="15" viewBox="0 0 16 15">
                <path d="M3 1v13M1 3l2-2 2 2M1 12l2 2 2-2" stroke="#2b579a" fill="none" />
                <path d="M7 3h9M7 6h9M7 9h9M7 12h9" stroke="#888" />
              </svg>
            </Cell>
            <Cell $w={8}><Chev /></Cell>
            <Sep $l={4} $r={4} />
            <Cell $w={20}>
              <svg width="15" height="15" viewBox="0 0 15 15">
                <path d="M6 1l6 6-4 4-6-5z" fill="#fff" stroke="#b5b5b5" />
                <rect y="12" width="15" height="3" fill="#d8d8d8" />
              </svg>
            </Cell>
            <Cell $w={12}><Chev /></Cell>
            <Cell $w={14}>
              <svg width="13" height="13" viewBox="0 0 13 13">
                <path d="M.5.5h12v12H.5zM6.500.5v12M.5 6.500h12" stroke="#c8c8c8" fill="none" strokeDasharray="1 1" />
              </svg>
            </Cell>
            <Cell $w={20}><Chev /></Cell>
          </Row>
        </Rows>
        <GroupLabel $pr={16}>Paragraph{launcher}</GroupLabel>
      </Group>

      <Group $w={434}>
        <Gallery>
          <StyleItem>
            <StylePreview $size={11.5} $color="#777">AaBbCcDc</StylePreview>
            <StyleName>¶ Normal</StyleName>
          </StyleItem>
          <StyleItem>
            <StylePreview $size={11.5} $color="#777">AaBbCcDc</StylePreview>
            <StyleName>¶ No Spac...</StyleName>
          </StyleItem>
          <StyleItem>
            <StylePreview $size={17} $color="#aab4c2" $thin>AaBbCc</StylePreview>
            <StyleName>Heading 1</StyleName>
          </StyleItem>
          <StyleItem>
            <StylePreview $size={13.500} $color="#b5bdc9" $thin>AaBbCcD</StylePreview>
            <StyleName>Heading 2</StyleName>
          </StyleItem>
          <StyleItem>
            <StylePreview $size={29} $color="#777" $thin>AaBl</StylePreview>
            <StyleName>Title</StyleName>
          </StyleItem>
          <StyleItem>
            <StylePreview $size={11.5} $color="#aaa">AaBbCcD</StylePreview>
            <StyleName>Subtitle</StyleName>
          </StyleItem>
          <GalleryScroll>
            <GalleryBtn><Chev style={{ transform: 'rotate(180deg)', opacity: 0.5 }} /></GalleryBtn>
            <GalleryBtn><Chev /></GalleryBtn>
            <GalleryBtn $last>
              <svg width="7" height="7" viewBox="0 0 7 7">
                <path d="M1 1h5M1 3.500h5L3.500 6.500z" stroke="#777" fill="#777" strokeWidth="0.7" />
              </svg>
            </GalleryBtn>
          </GalleryScroll>
        </Gallery>
        <GroupLabel $pr={16}>Styles{launcher}</GroupLabel>
      </Group>

      <Group $w={73} $pad={5}>
        <SmallList>
          <SmallItem $dark>
            <SmallIcon>
              <svg width="15" height="13" viewBox="0 0 15 13">
                <path d="M2 3h4v9H0zM9 3h4l2 9H9zM6 5h3v4H6zM3 0h2v3H3zM10 0h2v3h-2z" fill="#444" />
              </svg>
            </SmallIcon>
            Find
            <Chev style={{ marginLeft: 8 }} />
          </SmallItem>
          <SmallItem $dark>
            <SmallIcon>
              <svg width="15" height="15" viewBox="0 0 15 15">
                <text x="0" y="7" fontSize="8" fill="#555" fontFamily="Liberation Sans">ab</text>
                <text x="3" y="14" fontSize="9" fill="#2b6cb0" fontFamily="Liberation Sans">ac</text>
              </svg>
            </SmallIcon>
            Replace
          </SmallItem>
          <SmallItem $dark>
            <SmallIcon>
              <svg width="11" height="15" viewBox="0 0 11 15">
                <path d="M1 1v11l3-2.500 2 4.500 2-1-2-4h4z" fill="#fff" stroke="#777" />
              </svg>
            </SmallIcon>
            Select
            <Chev />
          </SmallItem>
        </SmallList>
        <GroupLabel $pr={0}>Editing</GroupLabel>
      </Group>
      <Collapse width="10" height="6" viewBox="0 0 10 6">
        <path d="M1 5l4-4 4 4" stroke="#555" strokeWidth="1.300" fill="none" />
      </Collapse>
    </Ribbon>

    <Main>
      <NavPane>
        <NavHead>
          Navigation
          <NavClose>
            <Chev style={{ borderTopWidth: 4, borderLeftWidth: 4, borderRightWidth: 4, borderTopColor: '#777' }} />
            <svg width="9" height="9" viewBox="0 0 9 9">
              <path d="M.5.5l8 8M8.500.5l-8 8" stroke="#666" strokeWidth="1.500" />
            </svg>
          </NavClose>
        </NavHead>
        <SearchBox>
          Search document
          <SearchIcons>
            <svg width="13" height="13" viewBox="0 0 13 13">
              <circle cx="8" cy="5" r="3.600" fill="none" stroke="#3d6ea5" strokeWidth="1.400" />
              <path d="M5.500 7.500L1 12" stroke="#3d6ea5" strokeWidth="2" />
            </svg>
            <Chev />
          </SearchIcons>
        </SearchBox>
        <NavTabs>
          <NavTab $w={80} $split>HEADINGS</NavTab>
          <NavTab $w={56} $split>PAGES</NavTab>
          <NavTab $w={60} $on>RESULTS</NavTab>
        </NavTabs>
      </NavPane>
      <Gutter />
      <Page>
        <DocFlow>
          <Line><Num>6)</Num>{DOC_TEXT}</Line>
          <Line><Num>7)</Num>{DOC_TEXT}</Line>
          <Line><Num>8)</Num>{DOC_TEXT}</Line>
          <TableWrap>
            <MoveHandle>
              <svg width="8" height="8" viewBox="0 0 8 8">
                <path d="M4 0v8M0 4h8" stroke="#777" />
              </svg>
            </MoveHandle>
            <Table>
              {['A', 'B', 'C', 'D', 'E', '', '', '', '', '', '', '', '', '', ''].map((c, i) => (
                <TableCell key={i} $first={i % 5 === 0} $pale={i === 5 || i === 10}>
                  {i === 0 && <TopGap />}
                  {c}
                </TableCell>
              ))}
            </Table>
            <RowEnd />
            <ResizeHandle />
          </TableWrap>
          <Blank />
          {['9)', '10)', '11)', '12)', '13)', '14)', '15)'].map((n) => (
            <Line key={n}><Num>{n}</Num>{DOC_TEXT}</Line>
          ))}
        </DocFlow>
      </Page>
      <RightGutter />
      <ScrollBar>
        <ScrollBtn />
        <ScrollThumb />
        <ScrollEnd />
      </ScrollBar>
      <Stray width="5" height="527" viewBox="0 0 5 527">
        <path d="M0 190l5 12v12H0z" fill="#c4c4c4" />
        <path d="M0 350l5 8M0 392c3-3 4 0 5 2M0 425l5 9M0 442l5 5M4 455l1 1M0 508c3-3 4 0 5 2" stroke="#111" strokeWidth="1.200" fill="none" />
      </Stray>
    </Main>

    <StatusBar>
      <StatusItem $w={76}>PAGE 1 OF 6</StatusItem>
      <StatusItem $w={75}>675 WORDS</StatusItem>
      <StatusItem $w={31}>
        <svg width="15" height="13" viewBox="0 0 15 13">
          <path d="M1 1h5v9H1zM6 1h2M8 1h5v6M8 1v9H6M10 9l1.500 2L14 8" fill="none" stroke="#e8eef7" />
        </svg>
      </StatusItem>
      <StatusItem $w={140}>ENGLISH (UNITED STATES)</StatusItem>
      <StatusRight>
        <ViewBtn $w={31}>
          <svg width="14" height="12" viewBox="0 0 14 12">
            <path d="M0 1h6l1 1 1-1h6v10H8l-1 1-1-1H0z" fill="#c4d3e8" />
            <path d="M7 2v9" stroke={BLUE} />
          </svg>
        </ViewBtn>
        <ViewBtn $w={35} $on>
          <svg width="13" height="12" viewBox="0 0 13 12">
            <rect x="0.500" y="0.500" width="12" height="11" fill="#dfe7f3" stroke="#fff" />
            <path d="M2 3h9M2 5h9M2 7h9M2 9h9" stroke="#5b7fb5" />
          </svg>
        </ViewBtn>
        <ViewBtn $w={35}>
          <svg width="14" height="13" viewBox="0 0 14 13">
            <rect x="0.500" y="0.500" width="9" height="11" fill="none" stroke="#dfe7f3" />
            <path d="M2 3h6M2 5h6M2 7h4" stroke="#dfe7f3" />
            <circle cx="10.500" cy="9.500" r="3" fill="#dfe7f3" />
          </svg>
        </ViewBtn>
        <Zoom>
          <span>-</span>
          <ZoomTrack><ZoomThumb /></ZoomTrack>
          <span>+</span>
        </Zoom>
        <ZoomPct>100%</ZoomPct>
      </StatusRight>
    </StatusBar>

    <Taskbar>
      <StartBtn>
        <svg width="16" height="16" viewBox="0 0 16 16">
          <path d="M0 2.300l6.500-.9v6.200H0zM7.300 1.300L16 0v7.600H7.300zM0 8.400h6.500v6.200L0 13.700zM7.300 8.400H16V16l-8.700-1.300z" fill="#fff" />
        </svg>
      </StartBtn>
      <Cortana>
        <svg width="20" height="20" viewBox="0 0 20 20">
          <circle cx="10" cy="10" r="8" fill="none" stroke="#e8e8e8" strokeWidth="2.500" />
        </svg>
        I'm Cortana. Ask me anything.
      </Cortana>
      <TaskIcon $w={44}>
        <svg width="18" height="16" viewBox="0 0 18 16">
          <rect x="4" y="1" width="10" height="14" fill="none" stroke="#fff" strokeWidth="1.300" />
          <path d="M2 4H.5v8H2M16 4h1.500v8H16" fill="none" stroke="#fff" />
        </svg>
      </TaskIcon>
      <TaskIcon $w={48} $on><WordIcon size={20} /></TaskIcon>
      <TaskIcon $w={47}><FaEdge size={20} color="#1c7cd6" /></TaskIcon>
      <TaskIcon $w={42}>
        <svg width="20" height="18" viewBox="0 0 20 18">
          <path d="M0 1h8l2 2h10v14H0z" fill="#f2cf63" />
          <rect x="5" y="9" width="10" height="8" fill="#3ea6d8" />
          <rect x="8" y="11" width="4" height="6" fill="#f2cf63" />
        </svg>
      </TaskIcon>
      <TaskIcon $w={47}>
        <svg width="18" height="20" viewBox="0 0 18 20">
          <path d="M1 5h16v15H1z" fill="#fff" />
          <path d="M6 5V3a3 3 0 0 1 6 0v2" fill="none" stroke="#fff" strokeWidth="1.300" />
          <path d="M5 9h3.600v3.500H5zM9.400 9H13v3.500H9.400zM5 13.300h3.600v3.500H5zM9.400 13.300H13v3.500H9.400z" fill="#111" />
        </svg>
      </TaskIcon>
      <TaskIcon $w={48} $on><ChromeIcon /></TaskIcon>
      <Tray>
        <TrayCell $w={22}><ChevronUp size={17} color="#ddd" /></TrayCell>
        <TrayCell $w={27}>
          <svg width="18" height="15" viewBox="0 0 18 15">
            <rect x="0" y="3" width="13" height="8" fill="#c8c8c8" />
            <circle cx="12" cy="10" r="4.500" fill="#2ca24c" />
            <path d="M12 7v5M10 9l2-2 2 2" stroke="#fff" fill="none" />
          </svg>
        </TrayCell>
        <TrayCell $w={22}>
          <svg width="14" height="13" viewBox="0 0 14 13">
            <path d="M1 12A11 11 0 0 1 12 1M4 12a8 8 0 0 1 8-8M7 12a5 5 0 0 1 5-5" stroke="#8f8f8f" fill="none" />
            <path d="M12 12H9.500L12 9.500z" fill="#ddd" />
          </svg>
        </TrayCell>
        <TrayCell $w={18}><Volume2 size={16} color="#ddd" strokeWidth={1.300} /></TrayCell>
        <TrayCell $w={24}>
          <svg width="16" height="16" viewBox="0 0 16 16">
            <path d="M.7.7h14.600v11h-5l-2.300 3-2.300-3H.7z" fill="none" stroke="#e4e4e4" strokeWidth="1.200" />
            <path d="M3.500 4h9M3.500 6.500h9M3.500 9h6" stroke="#e4e4e4" />
          </svg>
        </TrayCell>
        <TrayCell $w={30}>ENG</TrayCell>
        <Clock>
          1:40 AM
          <br />
          2/27/2017
        </Clock>
      </Tray>
    </Taskbar>

    <Dialog>
      <DlgTitle>
        Find and Replace
        <DlgHelp>?</DlgHelp>
        <DlgClose>
          <svg width="10" height="10" viewBox="0 0 10 10">
            <path d="M.5.5l9 9M9.500.5l-9 9" stroke="#555" />
          </svg>
        </DlgClose>
      </DlgTitle>
      <DlgTabs>
        <DlgTab $w={49}><span>Fin<U>d</U></span></DlgTab>
        <DlgTab $w={55}><span>Re<U>p</U>lace</span></DlgTab>
        <DlgTab $w={53} $on><span><U>G</U>o To</span></DlgTab>
      </DlgTabs>
      <DlgPanel>
        <DlgCols>
          <ListCol>
            <FieldLabel>G<U>o</U> to what:</FieldLabel>
            <ListBox>
              <ListItems>
                <ListItem $on>Page</ListItem>
                <ListItem>Section</ListItem>
                <ListItem>Line</ListItem>
                <ListItem>Bookmark</ListItem>
                <ListItem>Comment</ListItem>
                <ListItem>Footnote</ListItem>
              </ListItems>
              <ListScroll>
                <svg width="9" height="5" viewBox="0 0 9 5">
                  <path d="M1 4.500l3.500-3.500 3.500 3.500" stroke="#555" strokeWidth="1.400" fill="none" />
                </svg>
                <ListThumb />
                <ListDown>
                  <svg width="9" height="5" viewBox="0 0 9 5">
                    <path d="M1 .5l3.500 3.500 3.500-3.500" stroke="#555" strokeWidth="1.400" fill="none" />
                  </svg>
                </ListDown>
              </ListScroll>
            </ListBox>
          </ListCol>
          <EntryCol>
            <FieldLabel><U>E</U>nter page number:</FieldLabel>
            <TextInput><Caret>4</Caret></TextInput>
            <Help>
              Enter + and – to move relative to the current location. Example: +4
              <br />
              will move forward four items.
            </Help>
          </EntryCol>
        </DlgCols>
        <DlgButtons>
          <DlgButton $kind="off" $ml={0}>Previous</DlgButton>
          <DlgButton $kind="main" $ml={9}><span>Go <U>T</U>o</span></DlgButton>
          <DlgButton $ml={10}>Close</DlgButton>
        </DlgButtons>
      </DlgPanel>
    </Dialog>

    <Pointer width="16" height="22" viewBox="0 0 16 22">
      <path d="M13.500 2L2.500 11l3 1-2.500 6 2.500 1.500 2.500-6 5 3z" fill="#fff" stroke="#444" strokeWidth="0.900" />
    </Pointer>
  </Screen>
);

export default App;
